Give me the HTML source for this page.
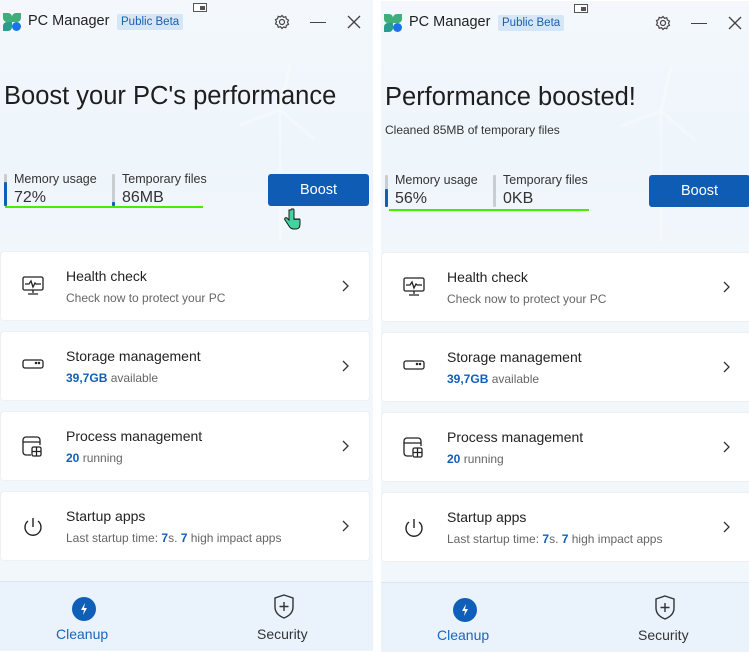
<!DOCTYPE html>
<html><head><meta charset="utf-8"><style>
*{margin:0;padding:0;box-sizing:border-box}
body{width:749px;height:651px;background:#fff;font-family:"Liberation Sans",sans-serif;position:relative;overflow:hidden}
.p{position:absolute;top:0;width:373px;height:651px;background:#f2f7fc;overflow:hidden}
.hero{position:absolute;left:0;top:0;width:373px;height:243px;background:linear-gradient(180deg,#f4f8fc 0%,#eef5fb 60%,#f1f6fb 100%)}
.a{position:absolute;white-space:nowrap}
.t{font-size:14.5px;color:#222}
.badge{background:#d5e6f6;color:#1a5fb0;font-size:11.5px;padding:2px 4px;border-radius:2px}
.big{font-size:25.5px;color:#1e1e1e}
.lbl{font-size:12.5px;color:#333}
.val{font-size:16px;color:#333}
.bar{position:absolute;width:3px;height:32px;background:#c9cdd2;border-radius:1px}
.bar i{position:absolute;left:0;bottom:0;width:3px;background:#0f5fb8;border-radius:1px}
.btn{position:absolute;width:101px;height:32px;background:#0f5cb5;border-radius:3px;color:#fff;font-size:14.5px;text-align:center;line-height:32px}
.card{position:absolute;left:0;width:370px;height:70px;background:#fff;border:1px solid #eef0f3;border-radius:4px}
.card .h{position:absolute;left:65px;top:16px;font-size:14px;color:#222}
.card .s{position:absolute;left:65px;top:39px;font-size:12px;color:#666}
.card .s b{color:#0f5fb8}
.card svg.i{position:absolute;left:21px;top:24px}
.card .ch{position:absolute;left:340px;top:28px}
.nav{position:absolute;left:0;top:581px;width:373px;height:70px;background:#eaf3fc;border-top:1px solid #dde7f1}
.green{position:absolute;height:2px;background:#44ee00}
.wm{opacity:.35}
</style></head><body>

<div class="p" style="left:0">
<div class="hero"></div>
<svg class="a wm" style="left:230px;top:60px" width="130" height="180"><g stroke="#fff" stroke-width="3" fill="none"><line x1="50" y1="50" x2="50" y2="180"/><line x1="50" y1="50" x2="60" y2="5"/><line x1="50" y1="50" x2="10" y2="65"/><line x1="50" y1="50" x2="85" y2="80"/></g></svg>
<svg class="a" style="left:3px;top:13px" width="18" height="18"><path d="M0 0h5a4 4 0 0 1 4 4v5H4a4 4 0 0 1-4-4z" fill="#3fae7a"/><path d="M18 0v5a4 4 0 0 1-4 4H9V4a4 4 0 0 1 4-4z" fill="#3fae7a"/><path d="M0 18v-5a4 4 0 0 1 4-4h5v5a4 4 0 0 1-4 4z" fill="#2a9d8f"/><circle cx="13.5" cy="13.5" r="4.5" fill="#1a73e8"/></svg>
<div class="a t" style="left:28px;top:13px">PC Manager</div>
<div class="a badge" style="left:117px;top:14px">Public Beta</div>
<svg class="a" style="left:193px;top:3px" width="14" height="9"><rect x=".5" y=".5" width="13" height="8" fill="#fff" stroke="#555"/><rect x="7" y="3" width="5" height="4" fill="#555"/></svg>
<svg class="a" style="left:274px;top:14px" width="16" height="16" fill="none" stroke="#444" stroke-width="1.2"><circle cx="8" cy="8" r="2.5"/><path d="M8 1.5l1.5 1.8 2.3-.6.6 2.3 2.1 1.1-1 2.1 1 2.1-2.1 1.1-.6 2.3-2.3-.6L8 14.5l-1.5-1.8-2.3.6-.6-2.3-2.1-1.1 1-2.1-1-2.1 2.1-1.1.6-2.3 2.3.6z"/></svg>
<div class="a" style="left:310px;top:22px;width:16px;height:1.3px;background:#444"></div>
<svg class="a" style="left:347px;top:15px" width="14" height="14" stroke="#444" stroke-width="1.3"><line x1="1" y1="1" x2="13" y2="13"/><line x1="13" y1="1" x2="1" y2="13"/></svg>
<div class="a big" style="left:4px;top:82px">Boost your PC's performance</div>
<div class="bar" style="left:4px;top:174px"><i style="height:24px"></i></div>
<div class="a lbl" style="left:14px;top:172px">Memory usage</div>
<div class="a val" style="left:14px;top:189px">72%</div>
<div class="bar" style="left:112px;top:174px"><i style="height:4px"></i></div>
<div class="a lbl" style="left:122px;top:172px">Temporary files</div>
<div class="a val" style="left:122px;top:189px">86MB</div>
<div class="green" style="left:5px;top:206px;width:198px"></div>
<div class="btn" style="left:268px;top:174px">Boost</div>
<svg class="a" style="left:283px;top:208px" width="18" height="22"><path d="M6 2v10l-2-2c-1.5-1-3 .5-2 2l4 6c1 2 3 3 5 3h2c3 0 4-2 4-5v-4c0-1.5-2-1.5-2 0 0-1.5-2-1.5-2 0 0-1.5-2-1.5-2 0V2c0-1.5-3-1.5-3 0z" fill="#3fd4a0" stroke="#1a1a1a" stroke-width="1"/></svg>
</div>

<div class="p" style="left:381px;top:1px">
<div class="hero"></div>
<svg class="a wm" style="left:230px;top:60px" width="130" height="180"><g stroke="#fff" stroke-width="3" fill="none"><line x1="50" y1="50" x2="50" y2="180"/><line x1="50" y1="50" x2="60" y2="5"/><line x1="50" y1="50" x2="10" y2="65"/><line x1="50" y1="50" x2="85" y2="80"/></g></svg>
<svg class="a" style="left:3px;top:13px" width="18" height="18"><path d="M0 0h5a4 4 0 0 1 4 4v5H4a4 4 0 0 1-4-4z" fill="#3fae7a"/><path d="M18 0v5a4 4 0 0 1-4 4H9V4a4 4 0 0 1 4-4z" fill="#3fae7a"/><path d="M0 18v-5a4 4 0 0 1 4-4h5v5a4 4 0 0 1-4 4z" fill="#2a9d8f"/><circle cx="13.5" cy="13.5" r="4.5" fill="#1a73e8"/></svg>
<div class="a t" style="left:28px;top:13px">PC Manager</div>
<div class="a badge" style="left:117px;top:14px">Public Beta</div>
<svg class="a" style="left:193px;top:3px" width="14" height="9"><rect x=".5" y=".5" width="13" height="8" fill="#fff" stroke="#555"/><rect x="7" y="3" width="5" height="4" fill="#555"/></svg>
<svg class="a" style="left:274px;top:14px" width="16" height="16" fill="none" stroke="#444" stroke-width="1.2"><circle cx="8" cy="8" r="2.5"/><path d="M8 1.5l1.5 1.8 2.3-.6.6 2.3 2.1 1.1-1 2.1 1 2.1-2.1 1.1-.6 2.3-2.3-.6L8 14.5l-1.5-1.8-2.3.6-.6-2.3-2.1-1.1 1-2.1-1-2.1 2.1-1.1.6-2.3 2.3.6z"/></svg>
<div class="a" style="left:310px;top:22px;width:16px;height:1.3px;background:#444"></div>
<svg class="a" style="left:347px;top:15px" width="14" height="14" stroke="#444" stroke-width="1.3"><line x1="1" y1="1" x2="13" y2="13"/><line x1="13" y1="1" x2="1" y2="13"/></svg>
<div class="a big" style="left:4px;top:82px">Performance boosted!</div>
<div class="a" style="left:4px;top:122px;font-size:12px;color:#333">Cleaned 85MB of temporary files</div>
<div class="bar" style="left:4px;top:174px"><i style="height:18px"></i></div>
<div class="a lbl" style="left:14px;top:172px">Memory usage</div>
<div class="a val" style="left:14px;top:189px">56%</div>
<div class="bar" style="left:112px;top:174px"></div>
<div class="a lbl" style="left:122px;top:172px">Temporary files</div>
<div class="a val" style="left:122px;top:189px">0KB</div>
<div class="green" style="left:8px;top:208px;width:200px"></div>
<div class="btn" style="left:268px;top:174px">Boost</div>
</div>

<div style="position:absolute;left:0;top:0;width:373px;height:651px">
 <div class="card" style="top:251px"><svg class="i" width="22" height="20" fill="none" stroke="#222" stroke-width="1.3"><rect x="1" y="1" width="20" height="13" rx="1.5"/><path d="M3 8h4l2-3 2 6 2-4 1 1h5"/><path d="M11 14v3M6 18h10"/></svg><div class="h">Health check</div><div class="s">Check now to protect your PC</div><svg class="ch" width="8" height="12" fill="none" stroke="#333" stroke-width="1.3"><path d="M2 1l5 5-5 5"/></svg></div>
 <div class="card" style="top:331px"><svg class="i" width="22" height="20" fill="none" stroke="#222" stroke-width="1.3"><rect x="1" y="4" width="20" height="8" rx="2"/><circle cx="14" cy="7" r=".6" fill="#222"/><circle cx="17" cy="7" r=".6" fill="#222"/></svg><div class="h">Storage management</div><div class="s"><b>39,7GB</b> available</div><svg class="ch" width="8" height="12" fill="none" stroke="#333" stroke-width="1.3"><path d="M2 1l5 5-5 5"/></svg></div>
 <div class="card" style="top:411px"><svg class="i" width="22" height="22" fill="none" stroke="#222" stroke-width="1.3"><path d="M9 19H4a3 3 0 0 1-3-3V4a3 3 0 0 1 3-3h11a3 3 0 0 1 3 3v5"/><path d="M1 6h17"/><rect x="10" y="11" width="9" height="9" rx="1.5"/><path d="M14.5 11v9M10 15.5h9"/></svg><div class="h">Process management</div><div class="s"><b>20</b> running</div><svg class="ch" width="8" height="12" fill="none" stroke="#333" stroke-width="1.3"><path d="M2 1l5 5-5 5"/></svg></div>
 <div class="card" style="top:491px"><svg class="i" width="22" height="22" fill="none" stroke="#222" stroke-width="1.4"><path d="M11 2v9"/><path d="M6 5a8 8 0 1 0 10 0"/></svg><div class="h">Startup apps</div><div class="s">Last startup time: <b>7</b>s. <b>7</b> high impact apps</div><svg class="ch" width="8" height="12" fill="none" stroke="#333" stroke-width="1.3"><path d="M2 1l5 5-5 5"/></svg></div>
 <div class="nav"><svg class="a" style="left:72px;top:15px" width="24" height="24"><circle cx="12" cy="12" r="12" fill="#0f5fb8"/><path d="M13 6l-4 7h3l-1 5 4-7h-3z" fill="#fff"/></svg><div class="a" style="left:56px;top:44px;font-size:14px;color:#1a65bf">Cleanup</div><svg class="a" style="left:273px;top:12px" width="22" height="26" fill="none" stroke="#333" stroke-width="1.4"><path d="M11 1l9 3v9c0 6-4 9-9 11-5-2-9-5-9-11V4z"/><path d="M11 8v9M6.5 12.5h9"/></svg><div class="a" style="left:257px;top:44px;font-size:14px;color:#333">Security</div></div>
</div>

<div style="position:absolute;left:381px;top:1px;width:373px;height:651px">
 <div class="card" style="top:251px"><svg class="i" width="22" height="20" fill="none" stroke="#222" stroke-width="1.3"><rect x="1" y="1" width="20" height="13" rx="1.5"/><path d="M3 8h4l2-3 2 6 2-4 1 1h5"/><path d="M11 14v3M6 18h10"/></svg><div class="h">Health check</div><div class="s">Check now to protect your PC</div><svg class="ch" width="8" height="12" fill="none" stroke="#333" stroke-width="1.3"><path d="M2 1l5 5-5 5"/></svg></div>
 <div class="card" style="top:331px"><svg class="i" width="22" height="20" fill="none" stroke="#222" stroke-width="1.3"><rect x="1" y="4" width="20" height="8" rx="2"/><circle cx="14" cy="7" r=".6" fill="#222"/><circle cx="17" cy="7" r=".6" fill="#222"/></svg><div class="h">Storage management</div><div class="s"><b>39,7GB</b> available</div><svg class="ch" width="8" height="12" fill="none" stroke="#333" stroke-width="1.3"><path d="M2 1l5 5-5 5"/></svg></div>
 <div class="card" style="top:411px"><svg class="i" width="22" height="22" fill="none" stroke="#222" stroke-width="1.3"><path d="M9 19H4a3 3 0 0 1-3-3V4a3 3 0 0 1 3-3h11a3 3 0 0 1 3 3v5"/><path d="M1 6h17"/><rect x="10" y="11" width="9" height="9" rx="1.5"/><path d="M14.5 11v9M10 15.5h9"/></svg><div class="h">Process management</div><div class="s"><b>20</b> running</div><svg class="ch" width="8" height="12" fill="none" stroke="#333" stroke-width="1.3"><path d="M2 1l5 5-5 5"/></svg></div>
 <div class="card" style="top:491px"><svg class="i" width="22" height="22" fill="none" stroke="#222" stroke-width="1.4"><path d="M11 2v9"/><path d="M6 5a8 8 0 1 0 10 0"/></svg><div class="h">Startup apps</div><div class="s">Last startup time: <b>7</b>s. <b>7</b> high impact apps</div><svg class="ch" width="8" height="12" fill="none" stroke="#333" stroke-width="1.3"><path d="M2 1l5 5-5 5"/></svg></div>
 <div class="nav"><svg class="a" style="left:72px;top:15px" width="24" height="24"><circle cx="12" cy="12" r="12" fill="#0f5fb8"/><path d="M13 6l-4 7h3l-1 5 4-7h-3z" fill="#fff"/></svg><div class="a" style="left:56px;top:44px;font-size:14px;color:#1a65bf">Cleanup</div><svg class="a" style="left:273px;top:12px" width="22" height="26" fill="none" stroke="#333" stroke-width="1.4"><path d="M11 1l9 3v9c0 6-4 9-9 11-5-2-9-5-9-11V4z"/><path d="M11 8v9M6.5 12.5h9"/></svg><div class="a" style="left:257px;top:44px;font-size:14px;color:#333">Security</div></div>
</div>
</body></html>
